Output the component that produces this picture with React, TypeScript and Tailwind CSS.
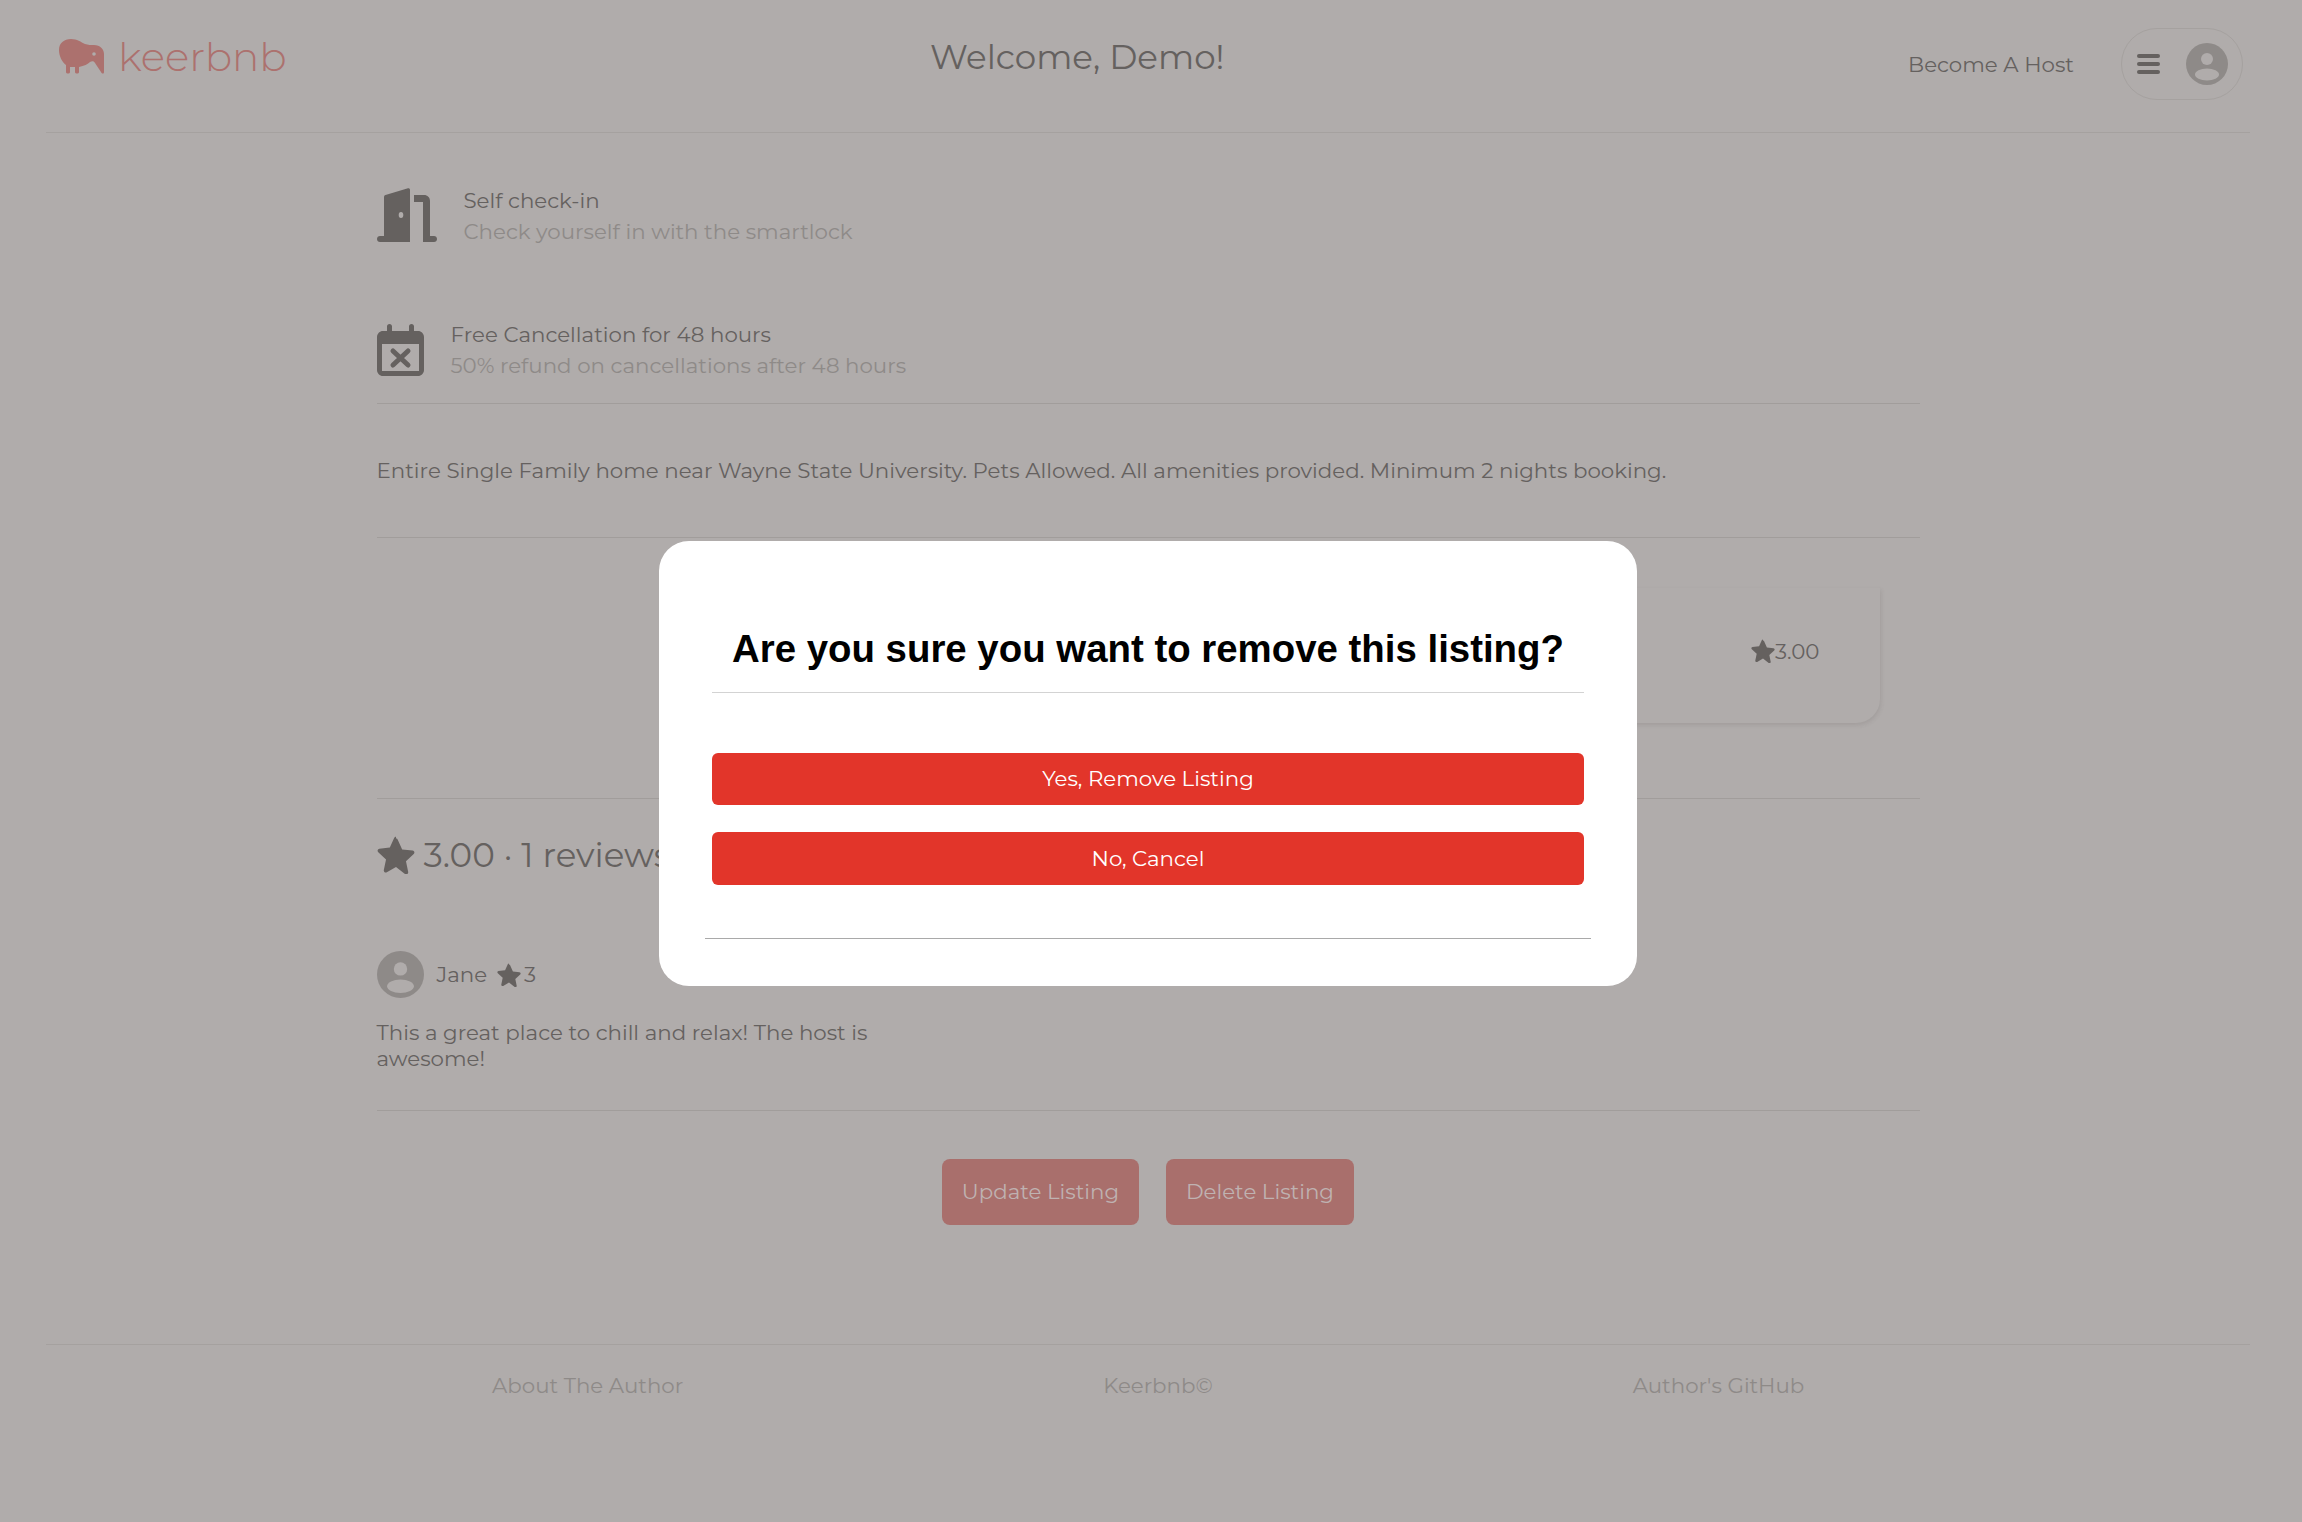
const font = "font-['Montserrat','Inter','Noto_Sans',sans-serif]";

const Star = ({ className }: { className: string }) => (
  <svg viewBox="0 0 24 24" className={className} fill="currentColor">
    <path d="M12 1.6c.5 0 .9.3 1.1.7l2.8 6.2 6.6.7c1.1.1 1.5 1.5.7 2.2l-4.9 4.6 1.4 6.7c.2 1.1-.9 1.9-1.9 1.4L12 19.5l-5.8 3.4c-1 .5-2.1-.3-1.9-1.4l1.4-6.7-4.9-4.6c-.8-.7-.4-2.1.7-2.2l6.6-.7 2.8-6.2c.2-.4.6-.7 1.1-.7Z" />
  </svg>
);

const Avatar = ({ className }: { className: string }) => (
  <svg viewBox="0 0 42 42" className={className}>
    <circle cx="21" cy="21" r="21" fill="#8e8a88" />
    <circle cx="21" cy="16" r="6" fill="#b0acab" />
    <ellipse cx="21" cy="31.500" rx="12" ry="6" fill="#b0acab" />
  </svg>
);

const Kiwi = () => (
  <svg viewBox="0 0 45 35" className="h-[35px] w-[45px]" fill="#ac716e">
    <path d="M0 11C0 4 5 0 12 0c6 0 10 3 14 5 3 1 6 1 9 1 6 0 10 4 10 9v18c0 2-2 2-3 0l-6-9c-1-2-3-2-5-1-2 2-6 4-11 5v5c0 2-4 2-4 0v-5h-5v5c0 2-4 2-4 0v-7C3 23 0 17 0 11Z" />
    <circle cx="35" cy="15" r="1.800" fill="#b0acab" />
  </svg>
);

const Door = () => (
  <svg viewBox="0 0 60 54" className="h-[54px] w-[60px]" fill="#65615f">
    <path d="M7 9c0-1 .5-1.800 1.500-2.100L31 0.300c1-.3 2 .5 2 1.500V54H3C1.300 54 0 52.700 0 51s1.300-3 3-3h4V9Z" />
    <path d="M37 7h10c3.500 0 6 2.500 6 6v35h4c1.700 0 3 1.300 3 3s-1.300 3-3 3H46V14h-9V7Z" />
    <ellipse cx="24" cy="27" rx="2.300" ry="3" fill="#b0acab" />
  </svg>
);

const CalendarX = () => (
  <svg viewBox="0 0 47 52" className="h-[52px] w-[47px]" fill="#65615f">
    <path d="M12.500 0C14 0 15 1 15 2.500V7h17V2.500C32 1 33 0 34.500 0S37 1 37 2.500V7h4c3.300 0 6 2.700 6 6v33c0 3.300-2.700 6-6 6H6c-3.300 0-6-2.700-6-6V13c0-3.300 2.700-6 6-6h4V2.500C10 1 11 0 12.500 0Z" />
    <rect x="5" y="20" width="37" height="27" fill="#b0acab" />
    <path d="M16 27l15 14M31 27 16 41" stroke="#65615f" strokeWidth="5" strokeLinecap="round" />
  </svg>
);

const Divider = () => <div className="h-px w-full bg-[#a19d9b]" />;

export default function App() {
  return (
    <div className={`relative flex h-[1522px] w-full flex-col bg-[#b0acab] pr-[52px] pl-[46px] text-[#65615f] ${font}`}>
      <header className="relative flex h-[133px] shrink-0 items-start border-b border-[#a5a19f]">
        <div className="mt-[35px] ml-[13px] flex items-center gap-[14px]">
          <Kiwi />
          <span className="mt-[2px] text-[40.500px] leading-none font-light text-[#ac716e]">keerbnb</span>
        </div>
        <h1 className="absolute top-[36px] left-[884px] text-[34.130px] leading-[42px] font-normal">Welcome, Demo!</h1>
        <div className="mt-[28px] mr-[7px] ml-auto flex items-center gap-[47px]">
          <span className="translate-y-[1px] text-[21.330px]">Become A Host</span>
          <div className="flex h-[72px] w-[122px] items-center justify-between rounded-full border border-[#a5a19f] pr-[14px] pl-[15px]">
            <div className="flex w-[23px] flex-col gap-[4px]">
              <div className="h-[4px] rounded-full bg-[#65615f]" />
              <div className="h-[4px] rounded-full bg-[#65615f]" />
              <div className="h-[4px] rounded-full bg-[#65615f]" />
            </div>
            <Avatar className="h-[42px] w-[42px]" />
          </div>
        </div>
      </header>

      <main className="mx-auto flex w-[1543px] flex-col">
        <div className="mt-[54px] flex items-center gap-[27px]">
          <Door />
          <div className="flex translate-y-[1px] flex-col gap-[7px] text-[21.330px] leading-[24px]">
            <span>Self check-in</span>
            <span className="text-[#8e8a88]">Check yourself in with the smartlock</span>
          </div>
        </div>
        <div className="mt-[80px] flex items-center gap-[27px] pb-[26px]">
          <CalendarX />
          <div className="flex flex-col gap-[7px] text-[21.330px] leading-[24px]">
            <span>Free Cancellation for 48 hours</span>
            <span className="text-[#8e8a88]">50% refund on cancellations after 48 hours</span>
          </div>
        </div>
        <Divider />
        <p className="flex h-[133px] items-center text-[21.350px]">
          Entire Single Family home near Wayne State University. Pets Allowed. All amenities provided. Minimum 2 nights booking.
        </p>
        <Divider />
        <div className="flex h-[260px] justify-end pt-[50px] pr-[40px]">
          <div className="flex h-[135px] w-[800px] items-center justify-end rounded-br-[24px] pr-[60px] pb-[8px] shadow-[1px_2px_4px_rgba(80,70,70,0.14)]">
            <div className="flex items-center text-[21.330px]">
              <Star className="h-[24px] w-[24px]" />
              <span>3.00</span>
            </div>
          </div>
        </div>
        <Divider />
        <div className="mt-[31px] flex items-center gap-[9px] text-[34.130px] leading-[50px]">
          <Star className="h-[38px] w-[38px]" />
          <span>3.00 · 1 reviews</span>
        </div>
        <div className="mt-[71px] flex items-center text-[21.330px]">
          <Avatar className="h-[47px] w-[47px]" />
          <span className="ml-[13px]">Jane</span>
          <Star className="ml-[10px] h-[24px] w-[24px]" />
          <span className="ml-[3px]">3</span>
        </div>
        <p className="mt-[21px] w-[520px] text-[21.330px] leading-[26px]">
          This a great place to chill and relax! The host is awesome!
        </p>
        <div className="mt-[39px]">
          <Divider />
        </div>
        <div className="mt-[48px] flex justify-center gap-[27px]">
          <button type="button" className="h-[66px] w-[197px] rounded-[8px] bg-[#a96f6c] text-[21.330px] text-[#bfb2b1]">
            Update Listing
          </button>
          <button type="button" className="h-[66px] w-[188px] rounded-[8px] bg-[#a96f6c] text-[21.330px] text-[#bfb2b1]">
            Delete Listing
          </button>
        </div>
      </main>

      <footer className="mt-[119px] flex h-[60px] items-center border-t border-[#a5a19f] pt-[23px] text-[21.330px] text-[#8e8a88]">
        <span className="ml-[446px]">About The Author</span>
        <span className="ml-[420px]">Keerbnb©</span>
        <span className="ml-[420px]">Author's GitHub</span>
      </footer>

      <div className="absolute top-[541px] left-[659px] flex h-[445px] w-[978px] flex-col items-center rounded-[30px] bg-white px-[46px] font-['Liberation_Sans',Arial,sans-serif]">
        <h2 className="mt-[86px] text-center text-[38.400px] leading-[44px] font-bold whitespace-nowrap text-black">
          Are you sure you want to remove this listing?
        </h2>
        <div className="mt-[21px] h-px w-[872px] bg-[#d3d3d3]" />
        <button type="button" className={`mt-[60px] h-[52px] w-[872px] rounded-[6px] bg-[#e2352a] text-[21.330px] text-white ${font}`}>
          Yes, Remove Listing
        </button>
        <button type="button" className={`mt-[27px] h-[53px] w-[872px] rounded-[6px] bg-[#e2352a] text-[21.330px] text-white ${font}`}>
          No, Cancel
        </button>
        <div className="mt-[53px] h-px w-[886px] bg-[#a9a9a9]" />
      </div>
    </div>
  );
}
